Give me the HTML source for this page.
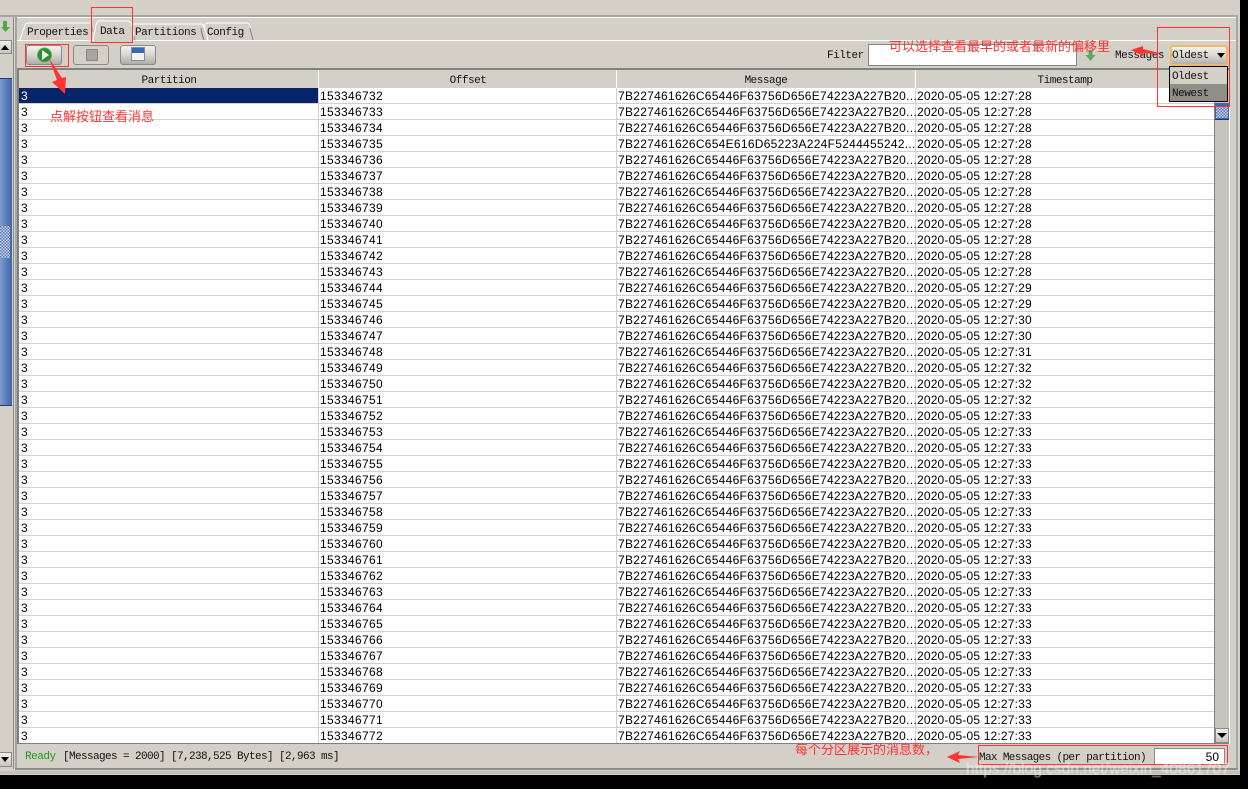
<!DOCTYPE html>
<html><head><meta charset="utf-8"><style>
html,body{margin:0;padding:0;width:1248px;height:789px;overflow:hidden;background:#000}
#p{position:absolute;left:0;top:0;width:1240px;height:775px;background:#d4d0c8;overflow:hidden}
.a{position:absolute}
.m{position:absolute;font:11px/16px "Liberation Mono",monospace;letter-spacing:-.48px;color:#111;white-space:pre}
.z{position:absolute;font:13px/18px "Liberation Sans","Noto Sans CJK SC",sans-serif;color:#f33;white-space:pre}
.b{position:absolute;width:34px;height:18px;top:45px;border:1px solid #8a8a8a;border-radius:3px;background:linear-gradient(#f2f0ec,#d8d5cf 50%,#b0ada6)}
.h{position:absolute;top:70px;height:18px;background:#d4d0c8;border-right:1px solid #fff;font:11px/23px "Liberation Mono",monospace;letter-spacing:-.48px;text-align:center;color:#111;border-bottom:2px solid #808080;box-sizing:content-box}
#t{position:absolute;left:19px;top:88px;width:1196px;height:656px;background:#fff;overflow:hidden}
.r{position:relative;height:15px;border-bottom:1px solid #d4d0c8;font:12px/17px "Liberation Sans",sans-serif;letter-spacing:.33px;color:#000;white-space:pre}
.r span{position:absolute;top:0;height:15px;border-right:1px solid #d4d0c8;box-sizing:content-box;line-height:17px}
.c1{left:0;padding-left:2px;width:297px}
.c2{left:300px;width:296px;padding-left:1px}
.c3{left:598px;width:297px;padding-left:1px;letter-spacing:.28px}
.c4{left:897px;width:297px;padding-left:1px;letter-spacing:.18px}
.s{background:#06246a;color:#fff;left:0;padding-left:2px;width:297px}
.rr{position:absolute;border:1px solid #f33;box-sizing:border-box}
</style></head><body><div id="p">
<!-- outer lines -->
<div class="a" style="left:0;top:15px;width:1237px;height:2px;background:#a8a6a0"></div>
<div class="a" style="left:15px;top:15px;width:2px;height:754px;background:#a8a6a0"></div>
<div class="a" style="left:17px;top:17px;width:1219px;height:1px;background:#fff"></div>
<div class="a" style="left:1236px;top:15px;width:2px;height:754px;background:#a8a6a0"></div>
<div class="a" style="left:15px;top:768px;width:1223px;height:2px;background:#8f8d88"></div>
<div class="a" style="left:0;top:771px;width:1240px;height:3px;background:#c4c1ba"></div>
<div class="a" style="left:13px;top:17px;width:1px;height:752px;background:#8f8d88"></div>
<!-- left scrollbar -->
<svg class="a" style="left:0;top:20px" width="12" height="15" viewBox="0 0 12 15"><path d="M3 1h4v6h3l-4.500 5L1 7h2z" fill="#4caa48"/><path d="M1 0h5" stroke="#8cc" stroke-width="1"/></svg>
<div class="a" style="left:0;top:40px;width:12px;height:14px;background:linear-gradient(#f2f0ec,#c8c5be);border:1px solid #8a8a8a;border-left:0;box-sizing:border-box"></div>
<div class="a" style="left:1px;top:45px;width:0;height:0;border:4px solid transparent;border-top:0;border-bottom:5px solid #000"></div>
<div class="a" style="left:0;top:78px;width:12px;height:328px;background:linear-gradient(90deg,#7d9bd0,#3f64a8);border-top:1px solid #1f3a70;border-bottom:1px solid #1f3a70;box-sizing:border-box"></div>
<div class="a" style="left:0;top:226px;width:10px;height:32px;background:repeating-conic-gradient(#c8d4ec 0 25%,#5878b4 0 50%) 0 0/3px 3px"></div>
<div class="a" style="left:0;top:752px;width:12px;height:15px;background:linear-gradient(#f2f0ec,#c8c5be);border:1px solid #8a8a8a;border-left:0;box-sizing:border-box"></div>
<div class="a" style="left:1px;top:757px;width:0;height:0;border:4px solid transparent;border-bottom:0;border-top:5px solid #000"></div>
<!-- tabs -->
<div class="a" style="left:17px;top:40px;width:1219px;height:1px;background:#fff"></div>
<svg class="a" style="left:15px;top:18px" width="250" height="24" viewBox="0 0 250 24" fill="none" stroke="#fff"><path d="M5 22L10 7Q11 5 14 5H76"/><path d="M78 22L81 7Q82 3 85 3H112Q116 3 117 7L119 18" stroke="#fff"/><path d="M118 6H186Q188 6 189 8L193 22"/><path d="M188 9Q190 5 193 5H232Q234 5 235 8L238 22"/><path d="M76 5L78 14M119 18L120 22" stroke="#999"/><path d="M186 10L187 16L189 22M235 10L238 22" stroke="#777"/></svg>
<div class="a" style="left:94px;top:38px;width:38px;height:4px;background:#d4d0c8"></div>
<div class="m" style="left:27px;top:25px">Properties</div>
<div class="m" style="left:100px;top:24px">Data</div>
<div class="m" style="left:135px;top:25px">Partitions</div>
<div class="m" style="left:207px;top:25px">Config</div>
<!-- toolbar -->
<div class="b" style="left:26px"></div>
<div class="b" style="left:73px;background:#d4d0c8"></div>
<div class="b" style="left:120px"></div>
<svg class="a" style="left:37px;top:47px" width="16" height="16" viewBox="0 0 16 16"><circle cx="7.500" cy="8" r="7" fill="#2c8c34"/><circle cx="7.500" cy="8" r="7" fill="none" stroke="#5fb060"/><path d="M5 3l7 5-7 5z" fill="#f0f4e8"/></svg>
<div class="a" style="left:86px;top:49px;width:10px;height:10px;background:#a8a6a2;border:1px solid #8c8a86"></div>
<div class="a" style="left:131px;top:47px;width:14px;height:14px;background:linear-gradient(#3c64b4 0 5px,#f4f2ec 5px 12px,#a88c54 12px);border:1px solid #7890a8;box-sizing:border-box"></div>
<div class="m" style="left:827px;top:48px">Filter</div>
<div class="a" style="left:868px;top:44px;width:209px;height:22px;background:#fff;border:1px solid #888;box-sizing:border-box"></div>
<svg class="a" style="left:1085px;top:50px" width="11" height="11" viewBox="0 0 11 11"><path d="M3.500 0h4v5h3l-5 6-5-6h3z" fill="#5aaa60"/></svg>
<div class="m" style="left:1115px;top:48px">Messages</div>
<div class="a" style="left:1170px;top:45px;width:58px;height:21px;border:2px solid #f0b860;border-radius:3px;box-sizing:border-box;background:linear-gradient(#f2f0ec,#d8d5cf 55%,#b4b1aa)"></div>
<div class="m" style="left:1172px;top:48px">Oldest</div>
<div class="a" style="left:1217px;top:53px;width:0;height:0;border:4px solid transparent;border-bottom:0;border-top:5px solid #000"></div>
<!-- table -->
<div class="a" style="left:17px;top:68px;width:1212px;height:2px;background:#808080"></div>
<div class="a" style="left:17px;top:68px;width:2px;height:676px;background:#808080"></div>
<div class="a" style="left:1215px;top:70px;width:14px;height:18px;background:#d4d0c8;border-bottom:2px solid #808080"></div>
<div class="h" style="left:20px;width:298px">Partition</div>
<div class="h" style="left:320px;width:296px">Offset</div>
<div class="h" style="left:617px;width:298px">Message</div>
<div class="h" style="left:916px;width:298px">Timestamp</div>
<div id="t">
<div class="r"><span class="s">3</span><span class="c2">153346732</span><span class="c3">7B227461626C65446F63756D656E74223A227B20...</span><span class="c4">2020-05-05 12:27:28</span></div>
<div class="r"><span class="c1">3</span><span class="c2">153346733</span><span class="c3">7B227461626C65446F63756D656E74223A227B20...</span><span class="c4">2020-05-05 12:27:28</span></div>
<div class="r"><span class="c1">3</span><span class="c2">153346734</span><span class="c3">7B227461626C65446F63756D656E74223A227B20...</span><span class="c4">2020-05-05 12:27:28</span></div>
<div class="r"><span class="c1">3</span><span class="c2">153346735</span><span class="c3">7B227461626C654E616D65223A224F5244455242...</span><span class="c4">2020-05-05 12:27:28</span></div>
<div class="r"><span class="c1">3</span><span class="c2">153346736</span><span class="c3">7B227461626C65446F63756D656E74223A227B20...</span><span class="c4">2020-05-05 12:27:28</span></div>
<div class="r"><span class="c1">3</span><span class="c2">153346737</span><span class="c3">7B227461626C65446F63756D656E74223A227B20...</span><span class="c4">2020-05-05 12:27:28</span></div>
<div class="r"><span class="c1">3</span><span class="c2">153346738</span><span class="c3">7B227461626C65446F63756D656E74223A227B20...</span><span class="c4">2020-05-05 12:27:28</span></div>
<div class="r"><span class="c1">3</span><span class="c2">153346739</span><span class="c3">7B227461626C65446F63756D656E74223A227B20...</span><span class="c4">2020-05-05 12:27:28</span></div>
<div class="r"><span class="c1">3</span><span class="c2">153346740</span><span class="c3">7B227461626C65446F63756D656E74223A227B20...</span><span class="c4">2020-05-05 12:27:28</span></div>
<div class="r"><span class="c1">3</span><span class="c2">153346741</span><span class="c3">7B227461626C65446F63756D656E74223A227B20...</span><span class="c4">2020-05-05 12:27:28</span></div>
<div class="r"><span class="c1">3</span><span class="c2">153346742</span><span class="c3">7B227461626C65446F63756D656E74223A227B20...</span><span class="c4">2020-05-05 12:27:28</span></div>
<div class="r"><span class="c1">3</span><span class="c2">153346743</span><span class="c3">7B227461626C65446F63756D656E74223A227B20...</span><span class="c4">2020-05-05 12:27:28</span></div>
<div class="r"><span class="c1">3</span><span class="c2">153346744</span><span class="c3">7B227461626C65446F63756D656E74223A227B20...</span><span class="c4">2020-05-05 12:27:29</span></div>
<div class="r"><span class="c1">3</span><span class="c2">153346745</span><span class="c3">7B227461626C65446F63756D656E74223A227B20...</span><span class="c4">2020-05-05 12:27:29</span></div>
<div class="r"><span class="c1">3</span><span class="c2">153346746</span><span class="c3">7B227461626C65446F63756D656E74223A227B20...</span><span class="c4">2020-05-05 12:27:30</span></div>
<div class="r"><span class="c1">3</span><span class="c2">153346747</span><span class="c3">7B227461626C65446F63756D656E74223A227B20...</span><span class="c4">2020-05-05 12:27:30</span></div>
<div class="r"><span class="c1">3</span><span class="c2">153346748</span><span class="c3">7B227461626C65446F63756D656E74223A227B20...</span><span class="c4">2020-05-05 12:27:31</span></div>
<div class="r"><span class="c1">3</span><span class="c2">153346749</span><span class="c3">7B227461626C65446F63756D656E74223A227B20...</span><span class="c4">2020-05-05 12:27:32</span></div>
<div class="r"><span class="c1">3</span><span class="c2">153346750</span><span class="c3">7B227461626C65446F63756D656E74223A227B20...</span><span class="c4">2020-05-05 12:27:32</span></div>
<div class="r"><span class="c1">3</span><span class="c2">153346751</span><span class="c3">7B227461626C65446F63756D656E74223A227B20...</span><span class="c4">2020-05-05 12:27:32</span></div>
<div class="r"><span class="c1">3</span><span class="c2">153346752</span><span class="c3">7B227461626C65446F63756D656E74223A227B20...</span><span class="c4">2020-05-05 12:27:33</span></div>
<div class="r"><span class="c1">3</span><span class="c2">153346753</span><span class="c3">7B227461626C65446F63756D656E74223A227B20...</span><span class="c4">2020-05-05 12:27:33</span></div>
<div class="r"><span class="c1">3</span><span class="c2">153346754</span><span class="c3">7B227461626C65446F63756D656E74223A227B20...</span><span class="c4">2020-05-05 12:27:33</span></div>
<div class="r"><span class="c1">3</span><span class="c2">153346755</span><span class="c3">7B227461626C65446F63756D656E74223A227B20...</span><span class="c4">2020-05-05 12:27:33</span></div>
<div class="r"><span class="c1">3</span><span class="c2">153346756</span><span class="c3">7B227461626C65446F63756D656E74223A227B20...</span><span class="c4">2020-05-05 12:27:33</span></div>
<div class="r"><span class="c1">3</span><span class="c2">153346757</span><span class="c3">7B227461626C65446F63756D656E74223A227B20...</span><span class="c4">2020-05-05 12:27:33</span></div>
<div class="r"><span class="c1">3</span><span class="c2">153346758</span><span class="c3">7B227461626C65446F63756D656E74223A227B20...</span><span class="c4">2020-05-05 12:27:33</span></div>
<div class="r"><span class="c1">3</span><span class="c2">153346759</span><span class="c3">7B227461626C65446F63756D656E74223A227B20...</span><span class="c4">2020-05-05 12:27:33</span></div>
<div class="r"><span class="c1">3</span><span class="c2">153346760</span><span class="c3">7B227461626C65446F63756D656E74223A227B20...</span><span class="c4">2020-05-05 12:27:33</span></div>
<div class="r"><span class="c1">3</span><span class="c2">153346761</span><span class="c3">7B227461626C65446F63756D656E74223A227B20...</span><span class="c4">2020-05-05 12:27:33</span></div>
<div class="r"><span class="c1">3</span><span class="c2">153346762</span><span class="c3">7B227461626C65446F63756D656E74223A227B20...</span><span class="c4">2020-05-05 12:27:33</span></div>
<div class="r"><span class="c1">3</span><span class="c2">153346763</span><span class="c3">7B227461626C65446F63756D656E74223A227B20...</span><span class="c4">2020-05-05 12:27:33</span></div>
<div class="r"><span class="c1">3</span><span class="c2">153346764</span><span class="c3">7B227461626C65446F63756D656E74223A227B20...</span><span class="c4">2020-05-05 12:27:33</span></div>
<div class="r"><span class="c1">3</span><span class="c2">153346765</span><span class="c3">7B227461626C65446F63756D656E74223A227B20...</span><span class="c4">2020-05-05 12:27:33</span></div>
<div class="r"><span class="c1">3</span><span class="c2">153346766</span><span class="c3">7B227461626C65446F63756D656E74223A227B20...</span><span class="c4">2020-05-05 12:27:33</span></div>
<div class="r"><span class="c1">3</span><span class="c2">153346767</span><span class="c3">7B227461626C65446F63756D656E74223A227B20...</span><span class="c4">2020-05-05 12:27:33</span></div>
<div class="r"><span class="c1">3</span><span class="c2">153346768</span><span class="c3">7B227461626C65446F63756D656E74223A227B20...</span><span class="c4">2020-05-05 12:27:33</span></div>
<div class="r"><span class="c1">3</span><span class="c2">153346769</span><span class="c3">7B227461626C65446F63756D656E74223A227B20...</span><span class="c4">2020-05-05 12:27:33</span></div>
<div class="r"><span class="c1">3</span><span class="c2">153346770</span><span class="c3">7B227461626C65446F63756D656E74223A227B20...</span><span class="c4">2020-05-05 12:27:33</span></div>
<div class="r"><span class="c1">3</span><span class="c2">153346771</span><span class="c3">7B227461626C65446F63756D656E74223A227B20...</span><span class="c4">2020-05-05 12:27:33</span></div>
<div class="r"><span class="c1">3</span><span class="c2">153346772</span><span class="c3">7B227461626C65446F63756D656E74223A227B20...</span><span class="c4">2020-05-05 12:27:33</span></div>
</div>
<!-- right scrollbar -->
<div class="a" style="left:1214px;top:88px;width:1px;height:656px;background:#808080"></div>
<div class="a" style="left:1215px;top:88px;width:14px;height:656px;background:#c8c5be"></div>
<div class="a" style="left:1215px;top:103px;width:14px;height:17px;background:#3f64a8;border-bottom:1px solid #1f3a70;box-sizing:border-box"></div>
<div class="a" style="left:1216px;top:106px;width:12px;height:12px;background:repeating-conic-gradient(#c8d4ec 0 25%,#5878b4 0 50%) 0 0/3px 3px"></div>
<div class="a" style="left:1215px;top:728px;width:14px;height:15px;background:linear-gradient(#f2f0ec,#c8c5be);border:1px solid #8a8a8a;box-sizing:border-box"></div>
<div class="a" style="left:1217px;top:733px;width:0;height:0;border:5px solid transparent;border-bottom:0;border-top:5px solid #000"></div>
<div class="a" style="left:17px;top:743px;width:1212px;height:1px;background:#808080"></div>
<div class="a" style="left:1229px;top:68px;width:1px;height:676px;background:#fff"></div>
<!-- dropdown -->
<div class="a" style="left:1169px;top:66px;width:59px;height:36px;background:#d4d0c8;border:1px solid #000;box-sizing:border-box"></div>
<div class="a" style="left:1170px;top:84px;width:57px;height:17px;background:#8f8e88"></div>
<div class="m" style="left:1172px;top:69px">Oldest</div>
<div class="m" style="left:1172px;top:86px">Newest</div>
<!-- status -->
<div class="m" style="left:25px;top:749px;color:#1a9a1a">Ready</div>
<div class="m" style="left:63px;top:749px;letter-spacing:-.6px">[Messages = 2000] [7,238,525 Bytes] [2,963 ms]</div>
<div class="m" style="left:979px;top:750px;letter-spacing:-.64px">Max Messages (per partition)</div>
<div class="a" style="left:1154px;top:748px;width:71px;height:17px;background:#fff;border:1px solid #888;box-sizing:border-box;font:12px/16px 'Liberation Sans',sans-serif;text-align:right;padding-right:5px">50</div>
<!-- annotations -->
<div class="rr" style="left:91px;top:7px;width:42px;height:36px"></div>
<div class="rr" style="left:25px;top:44px;width:44px;height:23px"></div>
<div class="rr" style="left:1157px;top:27px;width:73px;height:80px"></div>
<div class="rr" style="left:978px;top:745px;width:250px;height:20px"></div>
<div class="z" style="left:50px;top:108px">点解按钮查看消息</div>
<div class="z" style="left:889px;top:38px">可以选择查看最早的或者最新的偏移里</div>
<div class="z" style="left:795px;top:741px">每个分区展示的消息数，</div>
<svg class="a" style="left:0;top:0" width="1240" height="775" viewBox="0 0 1240 775"><path d="M49 58L62 78L66 77L65 94L52 82L57 80Z" fill="#f33"/><path d="M1131 50L1143 46V49L1163 54L1143 53V56Z" fill="#f33"/><path d="M947 757L960 751L958 755L979 757L958 759L960 763Z" fill="#f33"/></svg>
</div>
<div class="a" style="left:966px;top:761px;font:15.500px/18px 'Liberation Sans',sans-serif;color:rgba(240,240,240,.75);white-space:pre;filter:blur(.4px)">https://blog.csdn.net/weixin_40861707</div>
</body></html>
